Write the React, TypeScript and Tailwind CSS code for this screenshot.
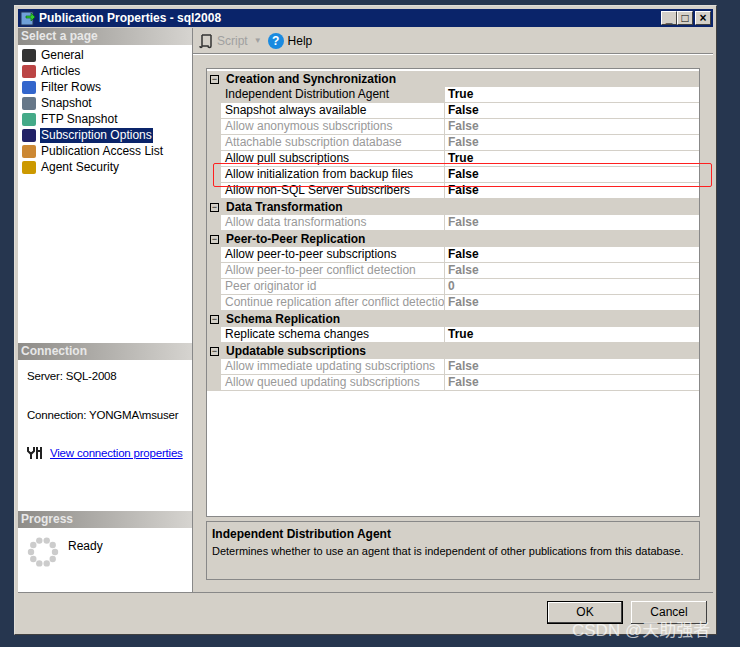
import React from "react";

const F = { fontFamily: '"Liberation Sans", Tahoma, Arial, sans-serif' };

type Row = { n: string; v: string; d?: boolean };
const cats: { t: string; rows: Row[] }[] = [
  { t: "Creation and Synchronization", rows: [
    { n: "Independent Distribution Agent", v: "True" },
    { n: "Snapshot always available", v: "False" },
    { n: "Allow anonymous subscriptions", v: "False", d: true },
    { n: "Attachable subscription database", v: "False", d: true },
    { n: "Allow pull subscriptions", v: "True" },
    { n: "Allow initialization from backup files", v: "False" },
    { n: "Allow non-SQL Server Subscribers", v: "False" },
  ]},
  { t: "Data Transformation", rows: [{ n: "Allow data transformations", v: "False", d: true }] },
  { t: "Peer-to-Peer Replication", rows: [
    { n: "Allow peer-to-peer subscriptions", v: "False" },
    { n: "Allow peer-to-peer conflict detection", v: "False", d: true },
    { n: "Peer originator id", v: "0", d: true },
    { n: "Continue replication after conflict detection", v: "False", d: true },
  ]},
  { t: "Schema Replication", rows: [{ n: "Replicate schema changes", v: "True" }] },
  { t: "Updatable subscriptions", rows: [
    { n: "Allow immediate updating subscriptions", v: "False", d: true },
    { n: "Allow queued updating subscriptions", v: "False", d: true },
  ]},
];

const pages = ["General", "Articles", "Filter Rows", "Snapshot", "FTP Snapshot", "Subscription Options", "Publication Access List", "Agent Security"];
const iconColors = ["#333", "#b44", "#36c", "#678", "#4a8", "#226", "#c83", "#c90"];

function Hdr({ t }: { t: string }) {
  return <div className="h-[17px] px-[3px] text-[12px] font-bold text-[#e8e8e8] bg-gradient-to-r from-[#8e8c88] to-[#d6d4d0] leading-[17px]">{t}</div>;
}

export default function App() {
  let first = true;
  return (
    <div style={F} className="w-[740px] h-[647px] bg-[#26364f] relative overflow-hidden text-[12px] text-black">
      <div className="absolute left-[14px] top-[5px] w-[703px] h-[630px] bg-[#d4d0c8] border border-t-[#e0ded8] border-l-[#e0ded8] border-r-[#404040] border-b-[#404040] p-[3px] flex flex-col">
        <div className="h-[19px] bg-[#0a246a] flex items-center px-[2px] gap-[3px]">
          <svg width="16" height="16" viewBox="0 0 16 16"><rect x="1" y="2" width="12" height="13" fill="#6fa0d8" stroke="#235" /><path d="M6 6h5V3l4 4-4 4V8H6z" fill="#3c3" stroke="#060" strokeWidth="0.6" /></svg>
          <span className="text-white font-bold text-[12px] flex-1">Publication Properties - sql2008</span>
          <div className="flex gap-0">
            {["_", "□", "×"].map((c, i) => (
              <div key={i} className={`w-[16px] h-[14px] bg-[#d4d0c8] border border-t-white border-l-white border-r-[#404040] border-b-[#404040] flex items-center justify-center text-[12px] font-bold leading-none ${i === 2 ? "ml-[2px]" : ""}`}>{c}</div>
            ))}
          </div>
        </div>
        <div className="flex flex-1 mt-[1px]">
          <div className="w-[175px] h-[564px] bg-white border-r border-[#888] flex flex-col whitespace-nowrap">
            <Hdr t="Select a page" />
            <div className="flex flex-col pt-[2px] pl-[4px]">
              {pages.map((p, i) => (
                <div key={p} className="h-[16px] flex items-center gap-[4px]">
                  <span className="w-[14px] h-[13px] rounded-[2px]" style={{ background: iconColors[i] }} />
                  <span className={`px-[1px] leading-[15px] ${i === 5 ? "bg-[#0a246a] text-white" : ""}`}>{p}</span>
                </div>
              ))}
            </div>
            <div className="flex-1" />
            <Hdr t="Connection" />
            <div className="h-[151px] px-[9px] pt-[8px] text-[11.5px] tracking-[-0.2px]">
              <div>Server: SQL-2008</div>
              <div className="mt-[21px]">Connection: YONGMA\msuser</div>
              <div className="mt-[21px] flex items-center gap-[6px]">
                <svg width="17" height="14" viewBox="0 0 17 14"><path d="M1 1v4l3 3v5M7 1v4l-3 3M10 1v12M14 1v12M9 5h6" stroke="#222" strokeWidth="2" fill="none" /></svg>
                <span className="text-[#0000ee] underline">View connection properties</span>
              </div>
            </div>
            <Hdr t="Progress" />
            <div className="h-[64px] flex px-[9px] pt-[8px] gap-[9px]">
              <svg width="32" height="32" viewBox="0 0 32 32">{Array.from({ length: 10 }).map((_, i) => { const a = i * Math.PI / 5; return <circle key={i} cx={16 + 12 * Math.cos(a)} cy={16 + 12 * Math.sin(a)} r="3.2" fill="#ccc" />; })}</svg>
              <span className="mt-[1px]">Ready</span>
            </div>
          </div>
          <div className="flex-1 flex flex-col">
            <div className="h-[26px] flex items-center gap-[4px] pl-[6px] border-b border-[#888]">
              <svg width="14" height="16" viewBox="0 0 14 16"><path d="M3 2h9M3 2v11c0 2-2 2-2 0M12 2v11c0 2-3 2-3 0H3" stroke="#333" strokeWidth="1.5" fill="none" /></svg>
              <span className="text-[#a0a0a0]">Script</span>
              <span className="text-[#a0a0a0] text-[8px] mx-[2px]">▼</span>
              <span className="w-[16px] h-[16px] rounded-full bg-[#1a8ae0] text-white font-bold text-[12px] flex items-center justify-center">?</span>
              <span>Help</span>
            </div>
            <div className="border-t border-white flex-1 px-[13px] pt-[13px] flex flex-col">
              <div className="h-[449px] bg-white border border-[#888] relative pt-[2px]">
                <div className="flex flex-col">
                  {cats.map(c => (
                    <React.Fragment key={c.t}>
                      <div className="h-[16px] bg-[#d4d0c8] flex items-center font-bold text-[12px]">
                        <span className="w-[9px] h-[9px] border border-black ml-[3px] mr-[7px] flex items-center justify-center text-[9px] leading-none font-normal">−</span>
                        {c.t}
                      </div>
                      {c.rows.map(r => {
                        const f = first; first = false;
                        return (
                          <div key={r.n} className="h-[16px] flex whitespace-nowrap">
                            <div className="w-[14px] bg-[#d4d0c8]" />
                            <div className={`w-[224px] overflow-hidden pl-[4px] leading-[15px] border-b border-r border-[#d4d0c8] ${f ? "bg-[#d4d0c8]" : ""} ${r.d ? "text-[#999]" : ""}`}>{r.n}</div>
                            <div className={`flex-1 pl-[3px] leading-[15px] font-bold border-b border-[#d4d0c8] ${r.d ? "text-[#8a8a8a]" : ""}`}>{r.v}</div>
                          </div>
                        );
                      })}
                    </React.Fragment>
                  ))}
                </div>
                <div className="absolute left-[6px] top-[94px] w-[499px] h-[24px] border border-[#ff2020] rounded-[2px]" />
              </div>
              <div className="mt-[4px] h-[59px] border border-[#888] px-[5px] pt-[3px]">
                <div className="font-bold text-[12px]">Independent Distribution Agent</div>
                <div className="text-[11px]">Determines whether to use an agent that is independent of other publications from this database.</div>
              </div>
            </div>
          </div>
        </div>
        <div className="h-[40px] flex items-center justify-end gap-[8px] pr-[6px] border-t border-[#888]">
          <div className="w-[76px] h-[23px] border border-black flex items-center justify-center bg-[#d4d0c8] shadow-[inset_-1px_-1px_#404040,inset_1px_1px_#fff]">OK</div>
          <div className="w-[76px] h-[23px] flex items-center justify-center bg-[#d4d0c8] shadow-[inset_-1px_-1px_#404040,inset_1px_1px_#fff]">Cancel</div>
        </div>
      </div>
      <div className="absolute left-[572px] top-[618px] text-[17px] text-white/70" style={{ fontFamily: '"Liberation Sans", "Noto Sans CJK SC", sans-serif' }}>CSDN @天助强者</div>
    </div>
  );
}
